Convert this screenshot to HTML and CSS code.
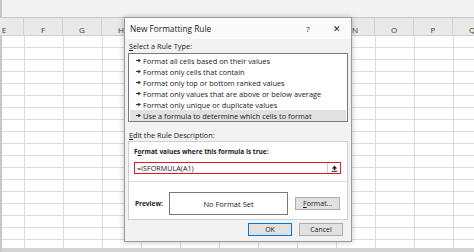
FILE: index.html
```html
<!DOCTYPE html>
<html>
<head>
<meta charset="utf-8">
<link rel="stylesheet" href="styles.css">
</head>
<body>
<div class="sheet">
  <div class="ribbon"></div>
  <div class="colheads">
    <span>E</span><span>F</span><span>G</span><span>H</span><span></span><span></span><span></span><span></span><span></span><span>N</span><span>O</span><span>P</span><span>Q</span>
  </div>
  <div class="cells"></div>
  <div class="status"></div>
</div>

<div class="dialog">
  <div class="titlebar">
    <span class="title">New Formatting Rule</span>
    <span class="help">?</span>
    <span class="close">✕</span>
  </div>
  <div class="label"><u>S</u>elect a Rule Type:</div>
  <ul class="rules">
    <li><span class="arr"></span>Format all cells based on their values</li>
    <li><span class="arr"></span>Format only cells that contain</li>
    <li><span class="arr"></span>Format only top or bottom ranked values</li>
    <li><span class="arr"></span>Format only values that are above or below average</li>
    <li><span class="arr"></span>Format only unique or duplicate values</li>
    <li class="sel"><span class="arr"></span>Use a formula to determine which cells to format</li>
  </ul>
  <div class="label label2"><u>E</u>dit the Rule Description:</div>
  <div class="desc">
    <div class="desc-top">
      <div class="bold">F<u>o</u>rmat values where this formula is true:</div>
      <div class="formula">
        <span class="ftext">=ISFORMULA(A1)</span>
        <span class="pick"><svg width="7" height="7" viewBox="0 0 7 7"><path d="M3.5 0.5 L6.2 3.4 H4.4 V5 H2.6 V3.4 H0.8 Z" fill="#222"/><rect x="0.8" y="5.8" width="5.4" height="1" fill="#222"/></svg></span>
      </div>
    </div>
    <div class="desc-bottom">
      <span class="bold">Preview:</span>
      <div class="preview">No Format Set</div>
      <button class="btn fmt"><u>F</u>ormat...</button>
    </div>
  </div>
  <div class="actions">
    <button class="btn ok">OK</button>
    <button class="btn">Cancel</button>
  </div>
</div>
</body>
</html>
```

FILE: styles.css
```css
* { box-sizing: border-box; }
html, body { margin: 0; padding: 0; }
body {
  width: 474px;
  height: 252px;
  overflow: hidden;
  position: relative;
  font-family: "Open Sans", "Liberation Sans", sans-serif;
  background: #fff;
}
.sheet {
  display: flex;
  flex-direction: column;
  height: 252px;
  border-left: 2px solid #c8c8c8;
}
.ribbon {
  height: 18px;
  background: #f3f3f3;
  border-bottom: 1px solid #c9c9c9;
}
.colheads {
  height: 18px;
  display: flex;
  background: #e9e9e9;
  border-bottom: 1px solid #cfcfcf;
  margin-left: -17px;
}
.colheads span {
  flex: 0 0 39px;
  border-right: 1px solid #d2d2d2;
  font-size: 8px;
  color: #3a3a3a;
  display: flex;
  align-items: center;
  justify-content: center;
  padding-top: 5px;
}
.cells {
  flex: 1;
  background-color: #fff;
  background-image:
    linear-gradient(to right, #dcdcdc 1px, transparent 1px),
    linear-gradient(to bottom, #dcdcdc 1px, transparent 1px);
  background-size: 39px 12px;
  background-position: 22px 11px;
}
.status {
  height: 4px;
  background: #d4d4d4;
}

.dialog {
  position: absolute;
  left: 124px;
  top: 17px;
  width: 228px;
  height: 225px;
  background: #f2f2f2;
  border: 1px solid #9a9a9a;
  box-shadow: 0 0 6px rgba(0,0,0,0.25);
  display: flex;
  flex-direction: column;
  font-size: 7px;
  color: #1a1a1a;
}
.titlebar {
  height: 21px;
  flex: none;
  background: #fafafa;
  display: flex;
  align-items: center;
  padding-left: 5px;
}
.title { flex: 1; font-size: 8.3px; }
.help { width: 12px; text-align: center; margin-right: 17px; font-size: 8px; }
.close { width: 12px; text-align: center; margin-right: 8px; font-size: 8.5px; }
.label {
  padding-left: 4px;
  height: 14px;
  flex: none;
  display: flex;
  align-items: center;
  font-size: 7.3px;
}
.label2 {
  height: 19px;
  align-items: flex-end;
  padding-bottom: 1px;
}
.rules {
  list-style: none;
  margin: 0 3px;
  padding: 1px 1px;
  background: #fff;
  border: 1px solid #7a7a7a;
  height: 69px;
  flex: none;
  font-size: 7.4px;
}
.rules li {
  height: 11px;
  display: flex;
  align-items: center;
  padding-left: 6px;
}
.rules li.sel { background: #e1e1e1; }
.arr {
  width: 5px;
  height: 4px;
  margin-right: 2px;
  background: #333;
  clip-path: polygon(0 37%, 45% 37%, 45% 0, 100% 50%, 45% 100%, 45% 63%, 0 63%);
}
.desc {
  margin: 0 3px;
  background: #fff;
  border: 1px solid #d0d0d0;
  height: 79px;
  flex: none;
  display: flex;
  flex-direction: column;
}
.desc-top {
  padding: 4px 6px 7px 5px;
  border-bottom: 1px solid #dcdcdc;
}
.bold { font-weight: 700; font-size: 6.5px; }
.desc-top .bold { height: 11px; display: flex; align-items: center; }
.formula {
  margin-top: 5px;
  height: 12px;
  border: 1px solid #e0182d;
  display: flex;
  align-items: center;
  font-size: 7.2px;
}
.ftext { flex: 1; padding-left: 2px; }
.pick {
  width: 13px;
  height: 10px;
  border-left: 1px solid #cfcfcf;
  display: flex;
  align-items: center;
  justify-content: center;
}
.pick svg { display: block; }
.desc-bottom {
  height: 23px;
  margin-top: 10px;
  display: flex;
  align-items: center;
  padding: 0 7px 0 6px;
}
.desc-bottom .bold { width: 34px; }
.preview {
  width: 120px;
  height: 23px;
  border: 1px solid #7a7a7a;
  display: flex;
  align-items: center;
  justify-content: center;
  font-size: 7.5px;
}
.btn {
  font-family: inherit;
  font-size: 7px;
  color: #1a1a1a;
  background: #e1e1e1;
  border: 1px solid #adadad;
  width: 44px;
  height: 13px;
  padding: 0;
  margin: 0;
}
.fmt { margin-left: 7px; width: 45px; }
.actions {
  display: flex;
  justify-content: flex-end;
  gap: 7px;
  padding: 3px 8px 0 0;
}
.ok { border: 1px solid #0078d7; }
```
